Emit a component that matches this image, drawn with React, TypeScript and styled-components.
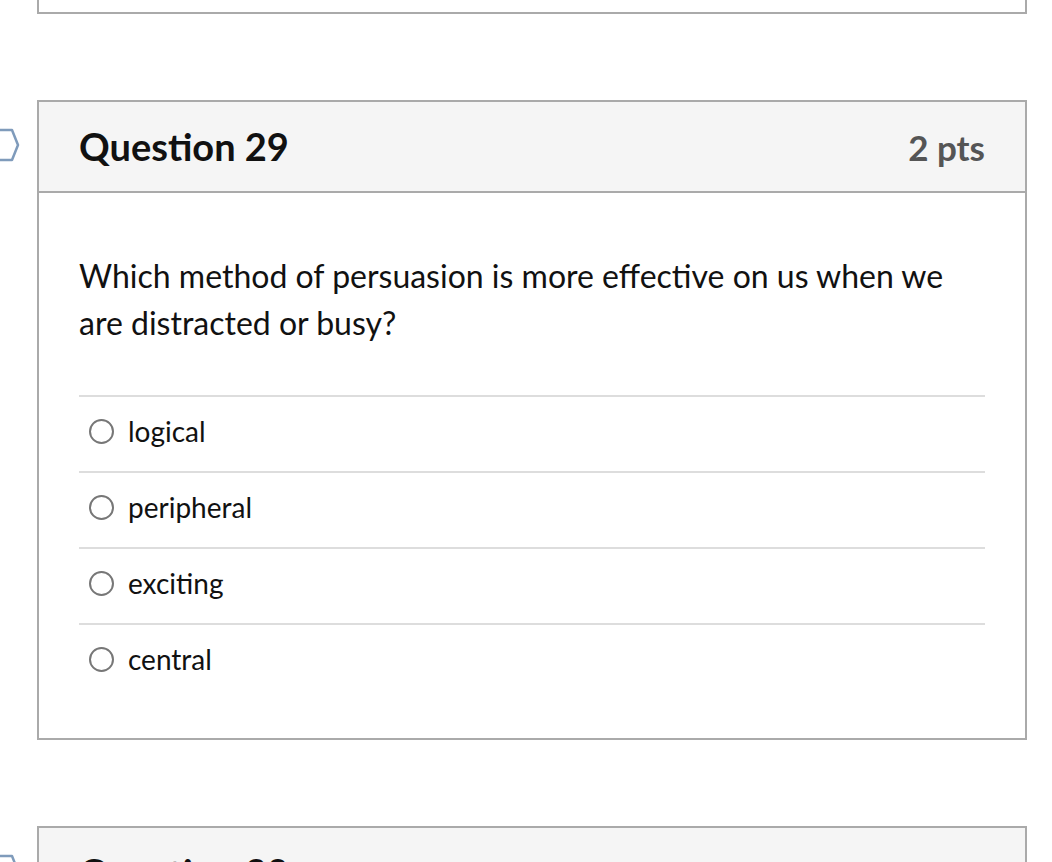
import styled, { createGlobalStyle } from "styled-components";

const GlobalStyle = createGlobalStyle`
  body {
    margin: 0;
    background: #ffffff;
    font-family: Lato, "Open Sans", "Liberation Sans", sans-serif;
    color: #111111;
  }
`;

const Page = styled.div`
  position: relative;
  width: 1052px;
  height: 862px;
  overflow: hidden;
`;

const PrevCard = styled.div`
  margin-left: 37px;
  width: 986px;
  height: 12px;
  border: 2px solid #aaaaaa;
  border-top: none;
`;

const Card = styled.div`
  position: relative;
  margin: 86px 0 0 37px;
  width: 986px;
  border: 2px solid #aaaaaa;
`;

const Header = styled.div`
  display: flex;
  align-items: center;
  justify-content: space-between;
  height: 89px;
  padding: 0 40px;
  background: #f5f5f5;
  border-bottom: 2px solid #aaaaaa;
`;

const Title = styled.h2`
  margin: 0 0 2px;
  font-size: 38px;
  font-weight: 700;
  color: #111111;
`;

const Points = styled.span`
  font-size: 35px;
  font-weight: 700;
  color: #555555;
`;

const Body = styled.div`
  padding: 59px 40px 39px;
`;

const QuestionText = styled.p`
  margin: 0 0 49px;
  font-size: 32px;
  line-height: 47px;
`;

const Answers = styled.ul`
  list-style: none;
  margin: 0;
  padding: 0;
`;

const Answer = styled.li`
  display: flex;
  align-items: center;
  gap: 14px;
  height: 68px;
  padding: 0 0 6px 10px;
  border-top: 2px solid #dddddd;
  font-size: 28px;
`;

const Radio = styled.span`
  display: inline-block;
  box-sizing: border-box;
  width: 25px;
  height: 25px;
  border: 2px solid #777777;
  border-radius: 50%;
`;

const Flag = styled.svg`
  position: absolute;
  left: -39px;
  top: 26px;
`;

const FlagIcon = () => (
  <Flag width="22" height="34" viewBox="0 0 22 34">
    <path
      d="M0 2 H12 L18 17 L12 32 H0"
      fill="none"
      stroke="#7f9bbb"
      strokeWidth="2.5"
      strokeLinejoin="round"
    />
  </Flag>
);

const answers = ["logical", "peripheral", "exciting", "central"];

export default function App() {
  return (
    <Page>
      <GlobalStyle />
      <PrevCard />
      <Card>
        <FlagIcon />
        <Header>
          <Title>Question 29</Title>
          <Points>2 pts</Points>
        </Header>
        <Body>
          <QuestionText>
            Which method of persuasion is more effective on us when we
            <br />
            are distracted or busy?
          </QuestionText>
          <Answers>
            {answers.map((a) => (
              <Answer key={a}>
                <Radio />
                {a}
              </Answer>
            ))}
          </Answers>
        </Body>
      </Card>
      <Card>
        <FlagIcon />
        <Header>
          <Title>Question 30</Title>
          <Points>2 pts</Points>
        </Header>
      </Card>
    </Page>
  );
}
